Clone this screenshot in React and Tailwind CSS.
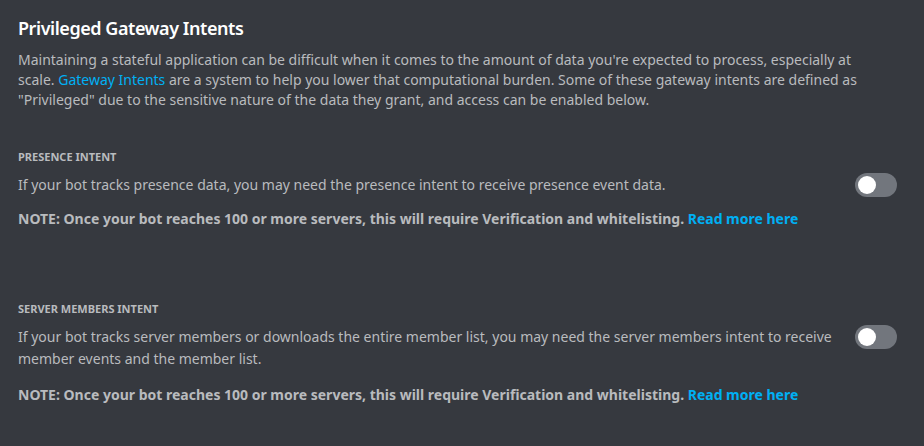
import React, { useState } from 'react';

const Toggle = ({ checked, onChange }) => (
  <button
    onClick={() => onChange(!checked)}
    className={`relative shrink-0 w-[42px] h-6 rounded-full transition-colors ${
      checked ? 'bg-[#43b581]' : 'bg-[#72767d]'
    }`}
  >
    <span
      className={`absolute top-[3px] w-[18px] h-[18px] rounded-full bg-white transition-all ${
        checked ? 'left-[21px]' : 'left-[3px]'
      }`}
    />
  </button>
);

const Intent = ({ label, children, checked, onChange, noteClass }) => (
  <div>
    <div className="text-[11px] leading-4 font-bold uppercase text-[#b9bbbe]">{label}</div>
    <div className="mt-[9px] flex items-start gap-[22px]">
      <p className="flex-1 text-[14px] leading-[22px] text-[#b9bbbe]">{children}</p>
      <div className="-mt-px">
        <Toggle checked={checked} onChange={onChange} />
      </div>
    </div>
    <p className={`${noteClass} text-[14px] leading-5 font-bold text-[#b9bbbe]`}>
      NOTE: Once your bot reaches 100 or more servers, this will require Verification and whitelisting.{' '}
      <a href="#" className="text-[#00b0f4]">Read more here</a>
    </p>
  </div>
);

export default function App() {
  const [presence, setPresence] = useState(false);
  const [members, setMembers] = useState(false);

  return (
    <div
      className="min-h-[446px] bg-[#36393f] pl-[18px] pr-[27px] pt-[16px]"
      style={{ fontFamily: '"Noto Sans", "Open Sans", sans-serif' }}
    >
      <h2 className="text-[18px] leading-6 font-semibold tracking-[-0.45px] text-white">Privileged Gateway Intents</h2>
      <p className="mt-[10px] max-w-[842px] text-[14px] leading-5 text-[#b9bbbe]">
        Maintaining a stateful application can be difficult when it comes to the amount of data you're expected to
        process, especially at scale. <a href="#" className="text-[#00b0f4]">Gateway Intents</a> are a system to help
        you lower that computational burden. Some of these gateway intents are defined as "Privileged" due to the
        sensitive nature of the data they grant, and access can be enabled below.
      </p>

      <div className="mt-[39px] flex flex-col gap-[72px]">
        <Intent label="Presence Intent" checked={presence} onChange={setPresence} noteClass="mt-[6px]">
          If your bot tracks presence data, you may need the presence intent to receive presence event data.
        </Intent>
        <Intent label="Server Members Intent" checked={members} onChange={setMembers} noteClass="mt-[15px]">
          If your bot tracks server members or downloads the entire member list, you may need the server members
          intent to receive member events and the member list.
        </Intent>
      </div>
    </div>
  );
}
